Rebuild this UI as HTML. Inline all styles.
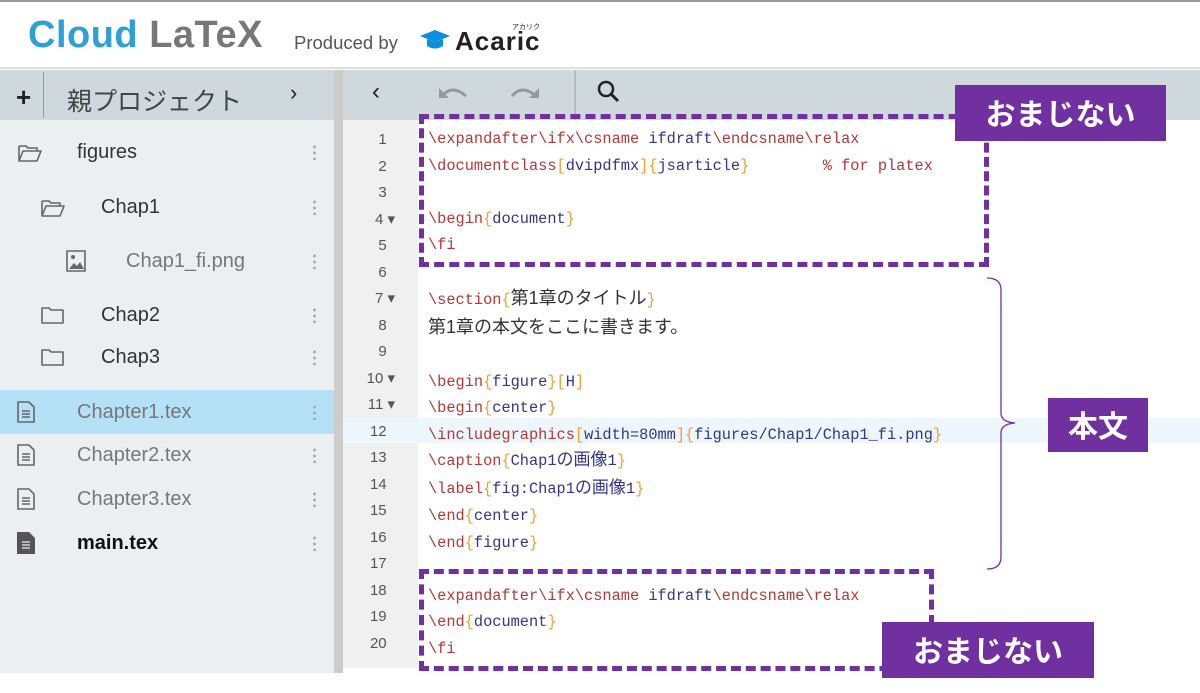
<!DOCTYPE html>
<html><head><meta charset="utf-8"><style>
*{margin:0;padding:0;box-sizing:border-box}
body{width:1200px;height:693px;background:#fff;position:relative;overflow:hidden;font-family:"Liberation Sans","Noto Sans CJK JP",sans-serif}
.a{position:absolute}
.side{left:0;top:70px;width:334px;height:603px;background:#eceff1}
.tb{background:#cfd8dc}
.row{position:absolute;left:0;width:334px;height:40px;font-size:20px;color:#333;line-height:40px}
.dots{position:absolute;right:18px;top:12px;width:3px;height:16px;background:radial-gradient(circle,#aaa 1.3px,transparent 1.6px) 0 0/3px 6px repeat-y}
.code{font-family:"Liberation Mono","Noto Sans CJK JP",monospace;font-size:15.3px;line-height:26.5px;white-space:pre}
.c{color:#b03a3a}.b{color:#f0a030}.g{color:#343488}.k{color:#333;font-family:"Liberation Sans","Noto Sans CJK JP",sans-serif;font-size:18px}
.ln{position:absolute;left:343px;width:52px;text-align:right;color:#555;font-size:15px;font-family:"Liberation Sans",sans-serif}
.box{position:absolute;border:5px dashed #7030a0}
.lab{position:absolute;background:#7030a0;color:#fff;font-weight:bold;font-size:30px;text-align:center;font-family:"Noto Sans CJK JP",sans-serif}
</style></head><body>
<div class="a" style="left:0;top:0;width:1200px;height:2px;background:#999"></div>
<div class="a" style="left:28px;top:14px;font-size:38px;font-weight:bold;color:#2f9fd8;letter-spacing:0.5px">Cloud <span style="color:#777">LaTeX</span></div>
<div class="a" style="left:294px;top:32px;font-size:18.5px;color:#555">Produced by</div>
<svg class="a" style="left:418px;top:28px" width="34" height="24" viewBox="0 0 34 24"><path d="M2 8 L17 2 L32 8 L17 14Z" fill="#0a8fdc"/><path d="M9 11 v7 q8 5 16 0 v-7 l-8 3z" fill="#0a8fdc"/></svg>
<div class="a" style="left:455px;top:26px;font-size:26px;font-weight:bold;color:#222;letter-spacing:1px">Acaric</div>
<div class="a" style="left:512px;top:22px;font-size:7px;color:#222">アカリク</div>
<div class="a" style="left:0;top:67px;width:1200px;height:2px;background:#ddd"></div>
<div class="a side"></div>
<div class="a tb" style="left:0;top:70px;width:334px;height:50px"></div>
<div class="a" style="left:43px;top:72px;width:1px;height:46px;background:#999"></div>
<div class="a" style="left:16px;top:82px;font-size:26px;font-weight:bold;color:#222">+</div>
<div class="a" style="left:67px;top:82px;font-size:25px;color:#444">親プロジェクト</div>
<div class="a" style="left:290px;top:80px;font-size:22px;color:#222">›</div>
<div class="a" style="left:334px;top:70px;width:9px;height:603px;background:#ccc"></div>
<div class="a tb" style="left:343px;top:70px;width:857px;height:50px"></div>
<div class="a" style="left:574px;top:70px;width:2px;height:50px;background:#bbb"></div>
<div class="a" style="left:372px;top:78px;font-size:24px;color:#222">‹</div>
<svg class="a" style="left:436px;top:82px" width="34" height="22"><path d="M6 14 q10-12 24 0" stroke="#999" stroke-width="3" fill="none"/><path d="M3 6 v10 h10z" fill="#999"/></svg>
<svg class="a" style="left:508px;top:82px" width="34" height="22"><path d="M4 14 q10-12 24 0" stroke="#999" stroke-width="3" fill="none"/><path d="M31 6 v10 h-10z" fill="#999"/></svg>
<svg class="a" style="left:596px;top:79px" width="26" height="26"><circle cx="10" cy="10" r="7" stroke="#222" stroke-width="2.5" fill="none"/><path d="M15 15 l7 7" stroke="#222" stroke-width="3"/></svg>

<svg width="0" height="0" style="position:absolute"><defs>
<symbol id="fo" viewBox="0 0 24 18"><path d="M1 2 h7 l2 2 h9 v3 M1 2 v15 h18 l4 -10 h-18 l-4 10" stroke="#666" stroke-width="1.6" fill="none" stroke-linejoin="round"/></symbol>
<symbol id="fc" viewBox="0 0 24 18"><path d="M1 2 h7 l2 2 h12 v13 h-21z" stroke="#666" stroke-width="1.6" fill="none" stroke-linejoin="round"/></symbol>
<symbol id="fl" viewBox="0 0 18 22"><path d="M1 1 h11 l5 5 v15 h-16z M5 10 h8 M5 13 h8 M5 16 h8" stroke="#666" stroke-width="1.6" fill="none"/></symbol>
</defs></svg>
<div class="row" style="top:132px"><svg class="a" style="left:18px;top:12px" width="24" height="18"><use href="#fo"/></svg><span class="a" style="left:77px">figures</span><i class="dots"></i></div>
<div class="row" style="top:187px"><svg class="a" style="left:41px;top:12px" width="24" height="18"><use href="#fo"/></svg><span class="a" style="left:101px">Chap1</span><i class="dots"></i></div>
<div class="row" style="top:241px"><svg class="a" style="left:66px;top:9px" width="20" height="22"><path d="M1 1 h18 v20 h-18z" stroke="#666" stroke-width="1.6" fill="none"/><circle cx="7" cy="7" r="2" fill="#666"/><path d="M3 19 l5-6 3 3 3-4 4 7z" fill="#666"/></svg><span class="a" style="left:126px;color:#777">Chap1_fi.png</span><i class="dots"></i></div>
<div class="row" style="top:295px"><svg class="a" style="left:41px;top:11px" width="24" height="18"><use href="#fc"/></svg><span class="a" style="left:101px">Chap2</span><i class="dots"></i></div>
<div class="row" style="top:337px"><svg class="a" style="left:41px;top:11px" width="24" height="18"><use href="#fc"/></svg><span class="a" style="left:101px">Chap3</span><i class="dots"></i></div>
<div class="row" style="top:390px;height:44px;line-height:44px;background:#b5e1f6"><svg class="a" style="left:17px;top:11px" width="18" height="22"><use href="#fl"/></svg><span class="a" style="left:77px;color:#777">Chapter1.tex</span><i class="dots" style="top:14px"></i></div>
<div class="row" style="top:435px"><svg class="a" style="left:17px;top:9px" width="18" height="22"><use href="#fl"/></svg><span class="a" style="left:77px;color:#777">Chapter2.tex</span><i class="dots"></i></div>
<div class="row" style="top:479px"><svg class="a" style="left:17px;top:9px" width="18" height="22"><use href="#fl"/></svg><span class="a" style="left:77px;color:#777">Chapter3.tex</span><i class="dots"></i></div>
<div class="row" style="top:523px"><svg class="a" style="left:17px;top:9px" width="18" height="22"><path d="M0 0 h12 l6 6 v16 h-18z" fill="#555"/><path d="M5 10 h8 M5 13 h8 M5 16 h8" stroke="#eee" stroke-width="1.3"/></svg><span class="a" style="left:77px;font-weight:bold;color:#111">main.tex</span><i class="dots"></i></div>

<div class="a" style="left:343px;top:120px;width:75px;height:548px;background:#f0f0f0"></div>
<div class="a" style="left:343px;top:418px;width:857px;height:25px;background:#edf6fd"></div>
<div class="a" style="left:343px;top:668px;width:857px;height:25px;background:#fff"></div>
<div class="a" style="left:0;top:673px;width:343px;height:20px;background:#fff"></div>

<div class="a" style="left:0;top:127px">
<div class="ln" style="top:0;line-height:26.5px;white-space:pre">1  
2  
3  
4 ▾
5  
6  
7 ▾
8  
9  
10 ▾
11 ▾
12  
13  
14  
15  
16  
17  
18  
19  
20  </div></div>
<div class="a code" style="left:428px;top:126px"><span class="c">\expandafter\ifx\csname</span> <span class="g">ifdraft</span><span class="c">\endcsname\relax</span>
<span class="c">\documentclass</span><span class="b">[</span><span class="g">dvipdfmx</span><span class="b">]{</span><span class="g">jsarticle</span><span class="b">}</span>        <span class="c">% for platex</span>

<span class="c">\begin</span><span class="b">{</span><span class="g">document</span><span class="b">}</span>
<span class="c">\fi</span>

<span class="c">\section</span><span class="b">{</span><span class="k">第1章のタイトル</span><span class="b">}</span>
<span class="k">第1章の本文をここに書きます。</span>

<span class="c">\begin</span><span class="b">{</span><span class="g">figure</span><span class="b">}[</span><span class="g">H</span><span class="b">]</span>
<span class="c">\begin</span><span class="b">{</span><span class="g">center</span><span class="b">}</span>
<span class="c">\includegraphics</span><span class="b">[</span><span class="g">width=80mm</span><span class="b">]{</span><span class="g">figures/Chap1/Chap1_fi.png</span><span class="b">}</span>
<span class="c">\caption</span><span class="b">{</span><span class="g">Chap1<span style="font-size:17px">の画像</span>1</span><span class="b">}</span>
<span class="c">\label</span><span class="b">{</span><span class="g">fig:Chap1<span style="font-size:17px">の画像</span>1</span><span class="b">}</span>
<span class="c">\end</span><span class="b">{</span><span class="g">center</span><span class="b">}</span>
<span class="c">\end</span><span class="b">{</span><span class="g">figure</span><span class="b">}</span>

<span class="c">\expandafter\ifx\csname</span> <span class="g">ifdraft</span><span class="c">\endcsname\relax</span>
<span class="c">\end</span><span class="b">{</span><span class="g">document</span><span class="b">}</span>
<span class="c">\fi</span></div>

<div class="box" style="left:419px;top:114px;width:570px;height:153px"></div>
<div class="lab" style="left:955px;top:85px;width:211px;height:56px;line-height:54px">おまじない</div>
<div class="box" style="left:419px;top:569px;width:515px;height:102px"></div>
<div class="lab" style="left:882px;top:622px;width:212px;height:56px;line-height:54px">おまじない</div>
<svg class="a" style="left:985px;top:275px" width="50" height="300"><path d="M2 3 q14 0 14 12 V138 q0 9 14 10 q-14 1 -14 10 V282 q0 12 -14 12" stroke="#7030a0" stroke-width="1.3" fill="none"/></svg>
<div class="lab" style="left:1048px;top:398px;width:100px;height:54px;line-height:52px">本文</div>
</body></html>
